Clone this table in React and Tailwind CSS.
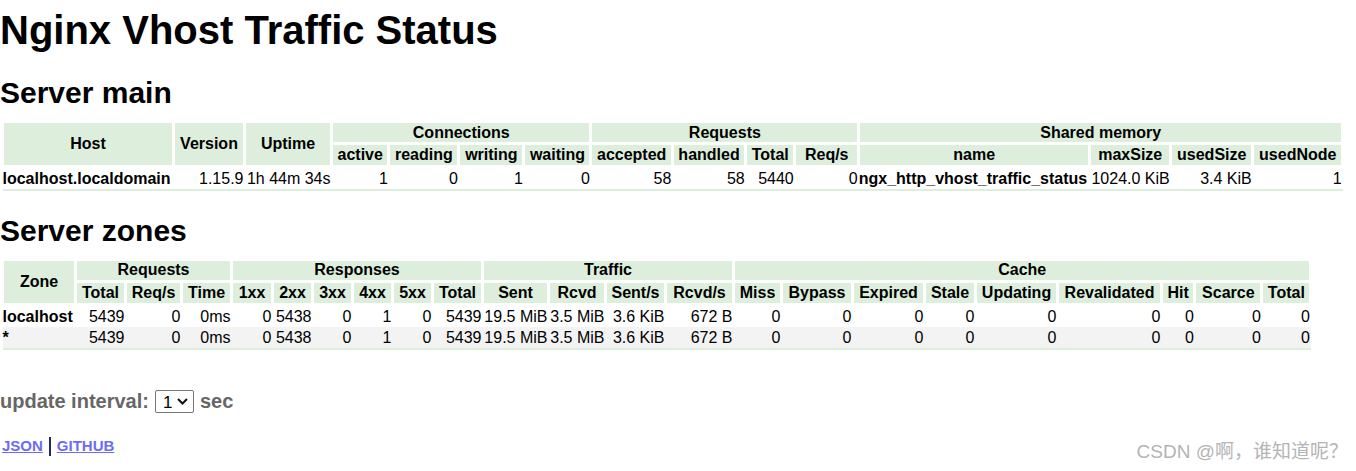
import React from "react";

const TH = "border-[3px] border-white bg-[#ddeedd] px-[4.5px] py-[0.5px] text-center font-bold whitespace-nowrap";
const TD = "px-px py-px text-right whitespace-nowrap leading-[19px]";
const TDB = "px-0 py-px text-left font-bold whitespace-nowrap leading-[19px]";

// w = min content width (visible cell width minus 9px of padding)
function Th({ children, rowSpan, colSpan, w = "" }) {
  return (
    <th rowSpan={rowSpan} colSpan={colSpan} className={TH}>
      <div className={w}>{children}</div>
    </th>
  );
}

const mainCols = [
  { label: "active", w: "min-w-[45px]" },
  { label: "reading", w: "min-w-[58px]" },
  { label: "writing", w: "min-w-[53px]" },
  { label: "waiting", w: "min-w-[55px]" },
  { label: "accepted", w: "min-w-[69px]" },
  { label: "handled", w: "min-w-[61px]" },
  { label: "Total", w: "min-w-[37px]" },
  { label: "Req/s", w: "min-w-[52px]" },
  { label: "name", w: "min-w-[219px]" },
  { label: "maxSize", w: "min-w-[69px]" },
  { label: "usedSize", w: "min-w-[70px]" },
  { label: "usedNode", w: "min-w-[78px]" },
];

function ServerMain() {
  return (
    <table className="ml-px mt-[10px] border-collapse text-[16px] leading-[18.4px] text-black">
      <thead>
        <tr>
          <Th rowSpan={2} w="min-w-[159px]">Host</Th>
          <Th rowSpan={2} w="min-w-[59px]">Version</Th>
          <Th rowSpan={2} w="min-w-[75px]">Uptime</Th>
          <Th colSpan={4}>Connections</Th>
          <Th colSpan={4}>Requests</Th>
          <Th colSpan={4}>Shared memory</Th>
        </tr>
        <tr>
          {mainCols.map((c) => (
            <Th key={c.label} w={c.w}>
              {c.label}
            </Th>
          ))}
        </tr>
      </thead>
      <tbody>
        <tr className="border-b-2 border-[#ddeedd]">
          <td className={TDB}>localhost.localdomain</td>
          <td className={TD}>1.15.9</td>
          <td className={TD}>1h 44m 34s</td>
          <td className={TD}>1</td>
          <td className={TD}>0</td>
          <td className={TD}>1</td>
          <td className={TD}>0</td>
          <td className={TD}>58</td>
          <td className={TD}>58</td>
          <td className={TD}>5440</td>
          <td className={TD}>0</td>
          <td className={TDB}>ngx_http_vhost_traffic_status</td>
          <td className={TD}>1024.0 KiB</td>
          <td className={TD}>3.4 KiB</td>
          <td className={TD}>1</td>
        </tr>
      </tbody>
    </table>
  );
}

const zoneCols = [
  { label: "Total", w: "min-w-[38px]" },
  { label: "Req/s", w: "min-w-[44px]" },
  { label: "Time", w: "min-w-[38px]" },
  { label: "1xx", w: "min-w-[29px]" },
  { label: "2xx", w: "min-w-[28px]" },
  { label: "3xx", w: "min-w-[28px]" },
  { label: "4xx", w: "min-w-[28px]" },
  { label: "5xx", w: "min-w-[28px]" },
  { label: "Total", w: "min-w-[38px]" },
  { label: "Sent", w: "min-w-[54px]" },
  { label: "Rcvd", w: "min-w-[45px]" },
  { label: "Sent/s", w: "min-w-[47px]" },
  { label: "Rcvd/s", w: "min-w-[56px]" },
  { label: "Miss", w: "min-w-[36px]" },
  { label: "Bypass", w: "min-w-[59px]" },
  { label: "Expired", w: "min-w-[60px]" },
  { label: "Stale", w: "min-w-[39px]" },
  { label: "Updating", w: "min-w-[70px]" },
  { label: "Revalidated", w: "min-w-[92px]" },
  { label: "Hit", w: "min-w-[21px]" },
  { label: "Scarce", w: "min-w-[55px]" },
  { label: "Total", w: "min-w-[37px]" },
];

const zoneRow = ["5439", "0", "0ms", "0", "5438", "0", "1", "0", "5439", "19.5 MiB", "3.5 MiB", "3.6 KiB", "672 B", "0", "0", "0", "0", "0", "0", "0", "0", "0"];

function ServerZones() {
  const rows = [
    { zone: "localhost", bg: "" },
    { zone: "*", bg: "bg-[#f3f3f3] border-b-2 border-[#ddeedd]" },
  ];
  return (
    <table className="ml-px mt-[10px] border-collapse text-[16px] leading-[18.4px] text-black">
      <thead>
        <tr>
          <Th rowSpan={2} w="min-w-[61px]">Zone</Th>
          <Th colSpan={3}>Requests</Th>
          <Th colSpan={6}>Responses</Th>
          <Th colSpan={4}>Traffic</Th>
          <Th colSpan={9}>Cache</Th>
        </tr>
        <tr>
          {zoneCols.map((c, i) => (
            <Th key={i} w={c.w}>
              {c.label}
            </Th>
          ))}
        </tr>
      </thead>
      <tbody>
        {rows.map((r) => (
          <tr key={r.zone} className={r.bg}>
            <td className={TDB}>{r.zone}</td>
            {zoneRow.map((v, i) => (
              <td key={i} className={TD}>
                {v}
              </td>
            ))}
          </tr>
        ))}
      </tbody>
    </table>
  );
}

export default function App() {
  return (
    <div className="relative h-[471px] overflow-hidden bg-white font-['Liberation_Sans',Arial,sans-serif] text-black">
      <h1 className="pt-[7px] text-[40px] font-bold leading-[46px]">Nginx Vhost Traffic Status</h1>
      <h2 className="mt-[22px] text-[30px] font-bold leading-[35px]">Server main</h2>
      <ServerMain />
      <h2 className="mt-[22px] text-[30px] font-bold leading-[35px]">Server zones</h2>
      <ServerZones />
      <div className="mt-[40px] flex items-center gap-[6px] text-[20px] font-bold leading-[23px] text-[#666]">
        <span>update interval:</span>
        <div className="relative">
          <select
            defaultValue="1"
            className="h-[23px] w-[39px] appearance-none rounded-[2px] border border-[#767676] bg-white pl-[7px] text-[17px] font-normal text-black"
          >
            {[1, 2, 3, 4, 5].map((n) => (
              <option key={n} value={n}>
                {n}
              </option>
            ))}
          </select>
          <svg className="pointer-events-none absolute right-[6px] top-[8px]" width="11" height="7" viewBox="0 0 11 7">
            <path d="M1 1 L5.5 5.5 L10 1" fill="none" stroke="#111" strokeWidth="2" />
          </svg>
        </div>
        <span>sec</span>
      </div>
      <div className="mt-[24px] flex items-center text-[15px] font-bold leading-[18px]">
        <a href="#" className="pl-[2px] text-[#6b6bf5] underline">JSON</a>
        <span className="mx-[6px] h-[19px] w-[2px] bg-[#1c2a6b]" />
        <a href="#" className="text-[#6b6bf5] underline">GITHUB</a>
      </div>
      <div className="absolute right-[8px] top-[440px] text-[19px] leading-[24px] text-[#b4b4b4] font-['Liberation_Sans','Noto_Sans_CJK_SC',sans-serif]">
        CSDN @啊，谁知道呢？
      </div>
    </div>
  );
}
